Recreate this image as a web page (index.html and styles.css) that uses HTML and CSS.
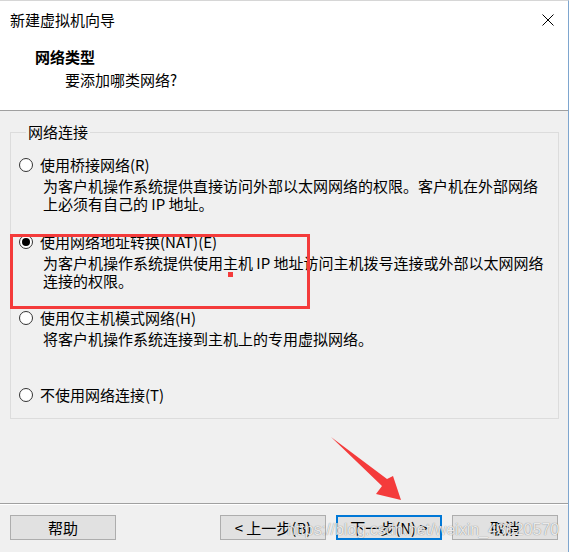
FILE: index.html
```html
<!doctype html>
<html>
<head>
<meta charset="utf-8">
<title>新建虚拟机向导</title>
<link rel="stylesheet" href="styles.css">
</head>
<body>

<div class="wizard">
  <div class="titlebar">
    <span class="title">新建虚拟机向导</span>
    <svg class="close" width="12" height="12" viewBox="0 0 12 12">
      <path d="M0.5 0.5 L11.5 11.5 M11.5 0.5 L0.5 11.5" stroke="#000" stroke-width="1"/>
    </svg>
  </div>

  <div class="head">
    <h1>网络类型</h1>
    <p>要添加哪类网络?</p>
  </div>

  <div class="content">
    <fieldset class="group">
      <legend>网络连接</legend>
      <label class="option">
        <span class="choice"><input type="radio" name="net">使用桥接网络(R)</span>
        <span class="desc">为客户机操作系统提供直接访问外部以太网网络的权限。客户机在外部网络<br>上必须有自己的 IP 地址。</span>
      </label>
      <label class="option">
        <span class="choice"><input type="radio" name="net" checked>使用网络地址转换(NAT)(E)</span>
        <span class="desc">为客户机操作系统提供使用主机 IP 地址访问主机拨号连接或外部以太网网络<br>连接的权限。</span>
      </label>
      <label class="option">
        <span class="choice"><input type="radio" name="net">使用仅主机模式网络(H)</span>
        <span class="desc">将客户机操作系统连接到主机上的专用虚拟网络。</span>
      </label>
      <label class="option">
        <span class="choice"><input type="radio" name="net">不使用网络连接(T)</span>
      </label>
    </fieldset>
  </div>

  <div class="foot">
    <button>帮助</button>
    <span class="spacer"></span>
    <button>&lt; 上一步(B)</button>
    <button class="default">下一步(N) &gt;</button>
    <button>取消</button>
  </div>

  <!-- annotations drawn on top of the dialog -->
  <div class="mark"></div>
  <div class="dot"></div>
  <svg class="arrow" width="570" height="552" viewBox="0 0 570 552">
    <polygon points="331,437 387,479 393,476 401,500 376,494 382,486" fill="#f43b3b"/>
  </svg>
  <div class="watermark">https://blog.csdn.net/weixin_43620570</div>
</div>

</body>
</html>
```

FILE: styles.css
```css
body {
  margin: 0;
  background: #fff;
  font-family: "Noto Sans CJK SC", sans-serif;
  font-size: 15px;
  color: #000;
}
.wizard {
  position: relative;
  width: 568px;
  height: 551px;
  border-top: 1px solid #d6d6d6;
  border-right: 1px solid #7ea6cf;
  background: #f0f0f0;
  overflow: hidden;
}
.titlebar {
  display: flex;
  align-items: center;
  justify-content: space-between;
  height: 38px;
  padding: 0 14px 0 10px;
  background: #fff;
}
.title {
  line-height: 20px;
}
.head {
  background: #fff;
  padding: 7px 0 19px;
  border-bottom: 1px solid #a0a0a0;
}
.head h1 {
  margin: 0 0 0 35px;
  font-size: 15px;
  font-weight: bold;
  line-height: 22px;
}
.head p {
  margin: 1px 0 0 65px;
  line-height: 22px;
}
.content {
  height: 392px;
  padding-top: 11px;
  box-sizing: border-box;
}
.group {
  margin: 0 9px 0 10px;
  padding: 13px 0 13px 8px;
  border: 1px solid #dcdcdc;
  min-width: 0;
}
.group legend {
  margin-left: 7px;
  padding: 0 2px;
  line-height: 20px;
}
.option {
  display: block;
  height: 76.7px;
}
.option:last-child {
  height: auto;
}
.choice {
  display: flex;
  align-items: center;
  height: 20px;
  line-height: 20px;
  white-space: nowrap;
}
.choice input {
  appearance: none;
  -webkit-appearance: none;
  width: 14px;
  height: 14px;
  margin: 0 7px 0 0;
  border: 1px solid #333;
  border-radius: 50%;
  background: #fff;
  box-sizing: border-box;
  display: grid;
  place-items: center;
}
.choice input:checked::after {
  content: "";
  width: 8px;
  height: 8px;
  border-radius: 50%;
  background: #000;
}
.desc {
  display: block;
  margin: 2px 0 0 24px;
  line-height: 18px;
  white-space: nowrap;
}
.foot {
  display: flex;
  gap: 10px;
  padding: 11px 10px 0;
  border-top: 1px solid #a0a0a0;
  box-shadow: inset 0 1px 0 #fff;
}
.spacer {
  flex: 1;
}
button {
  width: 106px;
  height: 25px;
  box-sizing: border-box;
  border: 1px solid #adadad;
  background: #e1e1e1;
  font-family: inherit;
  font-size: 15px;
  line-height: 21px;
  padding: 0;
  color: #000;
}
button.default {
  border: 2px solid #0078d7;
}
.mark {
  position: absolute;
  left: 10px;
  top: 233px;
  width: 300px;
  height: 75px;
  box-sizing: border-box;
  border: 3px solid #f43b3b;
}
.dot {
  position: absolute;
  left: 228px;
  top: 271px;
  width: 5px;
  height: 5px;
  background: #f43b3b;
}
.arrow {
  position: absolute;
  left: 0;
  top: -1px;
  pointer-events: none;
}
.watermark {
  position: absolute;
  left: 287px;
  top: 519px;
  font-family: "Liberation Sans", sans-serif;
  font-size: 16px;
  line-height: 20px;
  color: rgba(255, 255, 255, .85);
  text-shadow: 0 0 1px rgba(0, 0, 0, .55);
  white-space: nowrap;
  pointer-events: none;
}
```
